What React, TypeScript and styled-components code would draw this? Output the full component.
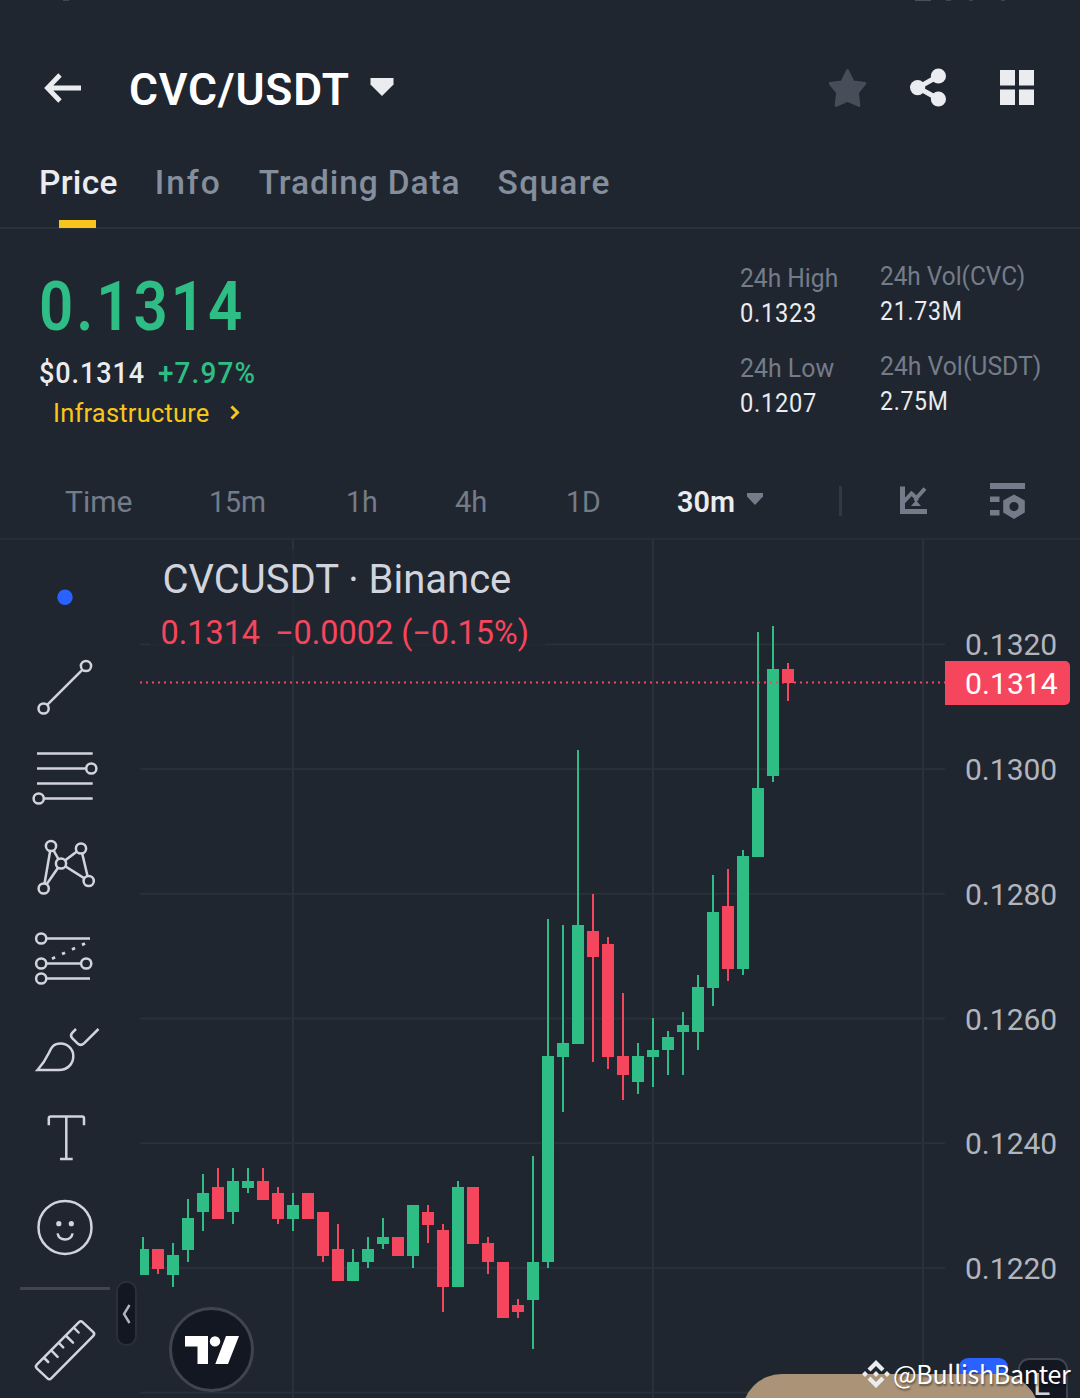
import React from "react";
import styled, { createGlobalStyle } from "styled-components";

const color = {
  bg: "#202630",
  line: "#2b313b",
  text: "#eaecef",
  tab: "#848e9c",
  muted: "#747c89",
  green: "#2ebd85",
  red: "#f6465d",
  yellow: "#f8c51c",
  tool: "#d1d4dc",
  axis: "#b2b5be",
  panel: "#131722",
};

const GlobalStyle = createGlobalStyle`
  * { box-sizing: border-box; }
  body { margin: 0; background: ${color.bg}; }
  svg { display: block; flex: none; }
`;

const Screen = styled.main`
  position: relative;
  width: 1080px;
  height: 1398px;
  overflow: hidden;
  display: flex;
  flex-direction: column;
  background: ${color.bg};
  color: ${color.text};
  font-family: Roboto, "Liberation Sans", sans-serif;
`;

const StatusEdge = styled.div`
  height: 46px;
  flex: none;
`;

const Header = styled.header`
  height: 83px;
  flex: none;
  display: flex;
  align-items: center;
  padding: 0 46px 0 43px;
`;

const Title = styled.h1`
  margin: 4px 17px 0 48px;
  font-size: 45px;
  line-height: 60px;
  font-weight: 600;
  color: #fff;
`;

const HeaderActions = styled.div`
  display: flex;
  align-items: center;
  margin-left: auto;
`;

const ActionGap = styled.span<{ $w: number }>`
  width: ${(p) => p.$w}px;
`;

const Tabs = styled.nav`
  height: 100px;
  flex: none;
  display: flex;
  gap: 37px;
  padding: 34px 0 0 39px;
  border-bottom: 2px solid ${color.line};
`;

const Tab = styled.div<{ $active?: boolean; $spacing?: number }>`
  display: flex;
  flex-direction: column;
  align-items: center;
  height: 66px;
  font-size: 33.5px;
  line-height: 40px;
  font-weight: 500;
  letter-spacing: ${(p) => p.$spacing ?? 0.3}px;
  color: ${(p) => (p.$active ? color.text : color.tab)};
`;

const TabBar = styled.span`
  width: 37px;
  height: 8px;
  margin: 17px 2px 0 0;
  background: ${color.yellow};
`;

const Summary = styled.section`
  height: 237px;
  flex: none;
  display: flex;
  padding: 0 0 0 39px;
`;

const PriceBlock = styled.div`
  width: 701px;
  padding-top: 43px;
`;

const Squeeze = styled.span<{ $x: number; $spacing?: number }>`
  display: inline-block;
  transform: scaleX(${(p) => p.$x});
  transform-origin: left center;
  letter-spacing: ${(p) => p.$spacing ?? 0}px;
  white-space: nowrap;
`;

const LastPrice = styled.div`
  font-size: 69px;
  line-height: 70px;
  font-weight: 600;
  color: ${color.green};
`;

const Quote = styled.div`
  display: grid;
  grid-template-columns: 119px auto;
  margin-top: 13px;
  font-size: 30px;
  line-height: 36px;
  font-weight: 500;
`;

const Change = styled.span`
  color: ${color.green};
`;

const Category = styled.div`
  display: flex;
  align-items: center;
  gap: 20px;
  margin-top: 7px;
  padding-left: 14px;
  font-size: 25.5px;
  line-height: 30px;
  letter-spacing: 0.2px;
  color: ${color.yellow};
`;

const StatColumn = styled.dl<{ $top: number; $w: number }>`
  width: ${(p) => p.$w}px;
  margin: 0;
  padding-top: ${(p) => p.$top}px;
`;

const StatLabel = styled.dt`
  font-size: 25.5px;
  line-height: 30px;
  color: ${color.muted};
`;

const StatValue = styled.dd`
  margin: 5px 0 25px;
  font-size: 26px;
  line-height: 30px;
  color: ${color.text};
`;

const Intervals = styled.nav`
  height: 74px;
  flex: none;
  display: grid;
  grid-template-columns: 144px 137px 109px 111px 111px 162px 60.5px 90px auto;
  align-items: center;
  padding: 0 0 0 65px;
  border-bottom: 2px solid #282e38;
  font-size: 30px;
  line-height: 36px;
  color: ${color.muted};
`;

const Interval = styled.span<{ $active?: boolean }>`
  display: flex;
  align-items: center;
  gap: ${(p) => (p.$active ? 10 : 0)}px;
  white-space: nowrap;
  font-weight: ${(p) => (p.$active ? 600 : 400)};
  color: ${(p) => (p.$active ? color.text : color.muted)};
`;

const IntervalTool = styled.span`
  margin-bottom: 2px;
`;

const Divider = styled.span`
  width: 3px;
  height: 30px;
  margin-bottom: 2px;
  background: #2f3a43;
`;

const Chart = styled.section`
  position: relative;
  flex: 1;
  display: flex;
  min-height: 0;
`;

const Rail = styled.aside`
  width: 140px;
  flex: none;
  display: flex;
  flex-direction: column;
  padding-top: 12px;
`;

const RailLine = styled.hr`
  width: 90px;
  height: 3px;
  margin: 15px 0 15px 20px;
  border: 0;
  flex: none;
  background: #40454f;
`;

const Axis = styled.div`
  width: 135px;
  padding-top: 42.3px;
`;

const AxisLabel = styled.div`
  height: 124.75px;
  padding-left: 20px;
  font-size: 30px;
  line-height: 126px;
  color: ${color.axis};
`;

const PriceTag = styled.div`
  position: absolute;
  left: 945px;
  top: 120.5px;
  width: 125px;
  height: 44px;
  padding-left: 20px;
  border-radius: 0 5px 5px 0;
  background: ${color.red};
  color: #fff;
  font-size: 30.2px;
  line-height: 46px;
`;

const Legend = styled.div`
  position: absolute;
  left: 150px;
  top: 10px;
  width: 395px;
  height: 106px;
  padding-left: 10.5px;
  background: rgba(32, 38, 48, 0.7);
`;

const Pair = styled.div`
  padding: 1px 0 0 2px;
  font-size: 40px;
  line-height: 57px;
  color: ${color.tool};
  white-space: pre;
`;

const Delta = styled.div`
  display: flex;
  gap: 15px;
  font-size: 32.4px;
  line-height: 50px;
  color: ${color.red};
  white-space: nowrap;
`;

const CollapseHandle = styled.div`
  position: absolute;
  left: 116px;
  top: 741px;
  width: 21px;
  height: 65px;
  display: grid;
  place-items: center;
  border: 2px solid #2a2f39;
  border-radius: 10px;
  background: ${color.panel};
`;

const ChartLogo = styled.div`
  position: absolute;
  left: 169px;
  top: 767px;
  width: 85px;
  height: 85px;
  display: grid;
  place-items: center;
  border: 3px solid #40444e;
  border-radius: 50%;
  background: ${color.panel};
`;

const BlueButton = styled.div`
  position: absolute;
  left: 959px;
  top: 818px;
  width: 49px;
  height: 60px;
  border-radius: 9px;
  background: #2962ff;
`;

const LogButton = styled.div`
  position: absolute;
  left: 1018px;
  top: 818px;
  width: 50px;
  height: 60px;
  border: 2px solid #40444e;
  border-radius: 11px;
  background: ${color.panel};
`;

const LogMark = styled.span`
  position: absolute;
  left: 1033px;
  top: 831px;
  font-size: 32px;
  line-height: 27px;
  color: ${color.tool};
`;

const Bubble = styled.div`
  position: absolute;
  left: 742px;
  top: 834px;
  width: 297px;
  height: 80px;
  border-radius: 42px;
  background: #ab9378;
`;

const Watermark = styled.div`
  position: absolute;
  left: 862px;
  top: 820px;
  display: flex;
  align-items: center;
  gap: 3px;
  font-family: "Noto Sans CJK SC", "Noto Sans", sans-serif;
  font-size: 25px;
  line-height: 30px;
  color: #fff;
  white-space: nowrap;
  text-shadow: 1px 2px 2px rgba(0, 0, 0, 0.45);
`;

const Handle = styled.span`
  margin-top: -3px;
  font-weight: 400;
  letter-spacing: -0.3px;
`;

type Candle = [open: number, high: number, low: number, close: number];

/* Prices in ticks of 0.0001. */
const candles: Candle[] = [
  [1219, 1225, 1219, 1223], [1223, 1223, 1219, 1220], [1219, 1224, 1217, 1222],
  [1223, 1231, 1221, 1228], [1229, 1235, 1226, 1232], [1233, 1236, 1228, 1228],
  [1229, 1236, 1227, 1234], [1233, 1236, 1232, 1234], [1234, 1236, 1231, 1231],
  [1232, 1233, 1227, 1228], [1228, 1232, 1226, 1230], [1232, 1232, 1228, 1228],
  [1229, 1229, 1221, 1222], [1223, 1227, 1218, 1218], [1218, 1223, 1218, 1221],
  [1221, 1225, 1220, 1223], [1224, 1228, 1223, 1225], [1225, 1225, 1222, 1222],
  [1222, 1230, 1220, 1230], [1229, 1230, 1224, 1227], [1226, 1227, 1213, 1217],
  [1217, 1234, 1217, 1233], [1233, 1233, 1224, 1224], [1224, 1225, 1219, 1221],
  [1221, 1221, 1212, 1212], [1214, 1215, 1212, 1213], [1215, 1238, 1207, 1221],
  [1221, 1276, 1220, 1254], [1254, 1275, 1245, 1256], [1256, 1303, 1256, 1275],
  [1274, 1280, 1253, 1270], [1272, 1273, 1252, 1254], [1254, 1264, 1247, 1251],
  [1250, 1256, 1248, 1254], [1254, 1260, 1249, 1255], [1255, 1258, 1251, 1257],
  [1258, 1261, 1251, 1259], [1258, 1267, 1255, 1265], [1265, 1283, 1262, 1277],
  [1278, 1284, 1266, 1268], [1268, 1287, 1267, 1286], [1286, 1322, 1286, 1297],
  [1299, 1323, 1298, 1316], [1316, 1317, 1311, 1314],
];

const TICK = 6.235;
const yOf = (p: number) => 104.3 + (1320 - p) * TICK;

function Plot() {
  return (
    <svg width="805" height="858" viewBox="0 0 805 858">
      {[153, 513, 783].map((x) => (
        <rect key={x} x={x - 1} y="0" width="2" height="858" fill={color.line} />
      ))}
      {[1320, 1300, 1280, 1260, 1240, 1220, 1200].map((p) => (
        <rect key={p} x="0" y={yOf(p) - 0.8} width="805" height="1.8" fill={color.line} />
      ))}
      {candles.map(([o, h, l, c], i) => {
        const x = 3 + i * 15;
        const fill = c >= o ? color.green : color.red;
        const top = Math.round(yOf(Math.max(o, c)));
        const bottom = Math.round(yOf(Math.min(o, c)) + 0.8);
        const high = Math.round(yOf(h));
        const low = Math.round(yOf(l) + 0.3);
        return (
          <g key={i} fill={fill}>
            <rect x={x - 1} y={high} width="2" height={low - high} />
            <rect x={x - 6} y={top} width="12" height={bottom - top} />
          </g>
        );
      })}
      <path d="M0 142.4H805" stroke={color.red} strokeWidth="2" strokeDasharray="2 4" />
    </svg>
  );
}

const toolGlyphs: React.ReactNode[] = [
  <circle cx="65" cy="45.3" r="7.7" fill="#2962ff" stroke="none" />,
  <>
    <path d="M47.2 62.8 82.3 27.8" />
    <circle cx="86" cy="24" r="5.1" />
    <circle cx="43.6" cy="66.5" r="5.1" />
  </>,
  <>
    <path d="M37 21.4H92.7M37 36.5H86M37 51.5H92.7M44 66.5H92.7" />
    <circle cx="91.3" cy="36.5" r="5.1" />
    <circle cx="38.7" cy="66.5" r="5.1" />
  </>,
  <>
    <path d="M51 24 43.7 66.5 61 41.5 81 26.5 88.7 59 61 41.5Z" />
    <g fill={color.bg}>
      <circle cx="51" cy="24" r="5.1" />
      <circle cx="81" cy="26.5" r="5.1" />
      <circle cx="61" cy="41.5" r="5.1" />
      <circle cx="43.7" cy="66.5" r="5.1" />
      <circle cx="88.7" cy="59" r="5.1" />
    </g>
  </>,
  <>
    <path d="M46.5 26.5H90M46.5 51.5H81M46.5 66.5H90" />
    <path d="M52 46.7 86 31" strokeWidth="2.8" strokeDasharray="3.4 7.6" />
    <circle cx="41.2" cy="26.5" r="5.1" />
    <circle cx="41.2" cy="51.5" r="5.1" />
    <circle cx="86.2" cy="51.5" r="5.1" />
    <circle cx="41.2" cy="66.5" r="5.1" />
  </>,
  <>
    <path d="M37.5 68C42.5 62.5 46 57 48.7 51.3C51.5 44.5 54 41.5 60.5 41.5C67.5 41.5 73.3 46.8 73.3 54C73.3 62 67.5 68 59 68Z" />
    <path d="M76 27 72.2 30.8Q69.8 33.4 72.2 36.2L77.5 41.4Q80.7 44.4 84 41.4L98.5 27" />
  </>,
  <path d="M48.8 33.3V26.5Q48.8 24.5 50.8 24.5H82Q84 24.5 84 26.5V33.3M66.3 24.5V67M60 67H72.7" />,
  <>
    <circle cx="65" cy="45.4" r="26.5" />
    <g fill={color.tool} stroke="none">
      <circle cx="58.8" cy="41.7" r="2.6" />
      <circle cx="71.3" cy="41.7" r="2.6" />
    </g>
    <path d="M57.6 51.4C58.6 59.4 71.4 59.4 72.6 51.4" />
  </>,
];

function ToolIcon({ children }: { children: React.ReactNode }) {
  return (
    <svg width="130" height="90" viewBox="0 0 130 90" fill="none" stroke={color.tool} strokeWidth="2.5">
      {children}
    </svg>
  );
}

const RulerGlyph = () => (
  <g strokeLinejoin="round" strokeLinecap="round">
    <path d="M79 17.1Q80.8 15.4 82.6 17.1L93.3 27.2Q95.1 29 93.3 30.8L51.2 73.3Q49.3 75.2 47.5 73.3L36.8 63.3Q35 61.5 36.8 59.6Z" />
    <path d="M44.2 53 48.2 57M51.5 45.6 57.6 51.8M59 38.2 63.2 42.3M66.2 31 73 37.6M74.2 23 78.6 27.5" />
  </g>
);

const stats = [
  {
    top: 34,
    width: 140,
    rows: [
      { label: "24h High", lx: 0.965, value: "0.1323", vx: 0.91, ls: 0.8 },
      { label: "24h Low", lx: 0.975, value: "0.1207", vx: 0.91, ls: 0.8 },
    ],
  },
  {
    top: 32,
    width: 190,
    rows: [
      { label: "24h Vol(CVC)", lx: 0.955, value: "21.73M", vx: 0.89, ls: 0.8 },
      { label: "24h Vol(USDT)", lx: 0.97, value: "2.75M", vx: 0.885, ls: 0.8 },
    ],
  },
];

export default function App() {
  return (
    <Screen>
      <GlobalStyle />
      <StatusEdge>
        <svg width="1080" height="2" viewBox="0 0 1080 2" fill="#4a515c">
          <path d="M63 0H69V.8H63ZM915 0H931V1H915ZM946 0H951V.8H946ZM969 0H973V.8H969ZM1001 0H1005V.8H1001Z" />
        </svg>
      </StatusEdge>

      <Header>
        <svg width="38" height="32" viewBox="0 0 38 32" fill="none" stroke={color.text} strokeWidth="4.8">
          <path d="M4.5 16H38M17 3 4.5 16 17 29" />
        </svg>
        <Title>
          <Squeeze $x={0.985} $spacing={0.8}>CVC/USDT</Squeeze>
        </Title>
        <svg width="24" height="20" viewBox="0 0 24 20" fill={color.text}>
          <path d="M.5 0H23.5V6.5L12 18 .5 6.5Z" />
        </svg>
        <HeaderActions>
          <svg width="38" height="40" viewBox="0 0 38 40" fill="#474d59" stroke="#474d59" strokeWidth="2.6" strokeLinejoin="round">
            <path d="M18.5 2.4 24.2 13.9 36 15.4 28.6 24.6 30 37.6 18.5 32.6 7 37.6 8.4 24.6 1 15.4 12.8 13.9Z" />
          </svg>
          <ActionGap $w={43} />
          <svg width="38" height="40" viewBox="0 0 38 40" fill={color.text}>
            <path d="M8 19.6 28.5 8M8 19.6 28.5 31" stroke={color.text} strokeWidth="5" />
            <circle cx="7.6" cy="19.6" r="7.6" />
            <circle cx="28.4" cy="8" r="7.6" />
            <circle cx="28.4" cy="31" r="7.6" />
          </svg>
          <ActionGap $w={52} />
          <svg width="34" height="35" viewBox="0 0 34 35" fill={color.text}>
            <path d="M0 0H15V15.5H0ZM19 0H34V15.5H19ZM0 19.5H15V35H0ZM19 19.5H34V35H19Z" />
          </svg>
        </HeaderActions>
      </Header>

      <Tabs>
        <Tab $active>
          Price
          <TabBar />
        </Tab>
        <Tab $spacing={2}>Info</Tab>
        <Tab $spacing={0.9}>Trading Data</Tab>
        <Tab $spacing={1.3}>Square</Tab>
      </Tabs>

      <Summary>
        <PriceBlock>
          <LastPrice>
            <Squeeze $x={0.87} $spacing={3.4}>0.1314</Squeeze>
          </LastPrice>
          <Quote>
            <Squeeze $x={0.9} $spacing={1}>$0.1314</Squeeze>
            <Change>
              <Squeeze $x={0.93} $spacing={1.2}>+7.97%</Squeeze>
            </Change>
          </Quote>
          <Category>
            Infrastructure
            <svg width="11" height="17" viewBox="0 0 11 17" fill="none" stroke={color.yellow} strokeWidth="3">
              <path d="M1.5 1.5 7.5 7.5 1.5 13.5" />
            </svg>
          </Category>
        </PriceBlock>
        {stats.map((col, i) => (
          <StatColumn key={i} $top={col.top} $w={col.width}>
            {col.rows.map((r) => (
              <React.Fragment key={r.label}>
                <StatLabel>
                  <Squeeze $x={r.lx}>{r.label}</Squeeze>
                </StatLabel>
                <StatValue>
                  <Squeeze $x={r.vx} $spacing={r.ls}>{r.value}</Squeeze>
                </StatValue>
              </React.Fragment>
            ))}
          </StatColumn>
        ))}
      </Summary>

      <Intervals>
        <Interval>Time</Interval>
        <Interval><Squeeze $x={0.95}>15m</Squeeze></Interval>
        <Interval><Squeeze $x={0.95}>1h</Squeeze></Interval>
        <Interval><Squeeze $x={0.97}>4h</Squeeze></Interval>
        <Interval><Squeeze $x={0.95}>1D</Squeeze></Interval>
        <Interval $active>
          <Squeeze $x={0.96}>30m</Squeeze>
          <svg width="16" height="18" viewBox="0 0 16 18" fill={color.muted}>
            <path d="M0 0H16V3.5L8 12 0 3.5Z" />
          </svg>
        </Interval>
        <Divider />
        <IntervalTool>
          <svg width="28" height="30" viewBox="0 0 28 30" fill="none" stroke={color.muted}>
            <path d="M2.5 0.5V25.5H27" strokeWidth="5" />
            <path d="M3.5 16 11.5 7.5 16.5 12 25 2.5" strokeWidth="4" />
            <path d="M11 20H21L17 15.5 19 13H13.5L15 15.5Z" fill={color.muted} stroke="none" />
          </svg>
        </IntervalTool>
        <IntervalTool>
          <svg width="36" height="38" viewBox="0 0 36 38" fill={color.muted}>
            <path d="M0 1H35V7H0ZM0 14.5H9.5V20H0ZM0 28H9.5V33.5H0Z" />
            <path fillRule="evenodd" d="M24 12.5 34.8 18.5V30.5L24 37 13.2 30.5V18.5ZM24 20A4.6 4.6 0 1 0 24 29.2A4.6 4.6 0 1 0 24 20Z" />
          </svg>
        </IntervalTool>
      </Intervals>

      <Chart>
        <Rail>
          {toolGlyphs.map((glyph, i) => (
            <ToolIcon key={i}>{glyph}</ToolIcon>
          ))}
          <RailLine />
          <ToolIcon>
            <RulerGlyph />
          </ToolIcon>
        </Rail>
        <Plot />
        <Axis>
          {["0.1320", "0.1300", "0.1280", "0.1260", "0.1240", "0.1220"].map((v) => (
            <AxisLabel key={v}>{v}</AxisLabel>
          ))}
        </Axis>

        <PriceTag>0.1314</PriceTag>
        <Legend>
          <Pair>CVCUSDT · Binance</Pair>
          <Delta>
            <span>0.1314</span>
            <span>−0.0002 (−0.15%)</span>
          </Delta>
        </Legend>
        <CollapseHandle>
          <svg width="10" height="22" viewBox="0 0 10 22" fill="none" stroke={color.axis} strokeWidth="2.4">
            <path d="M7.5 2 2 11 7.5 20" />
          </svg>
        </CollapseHandle>
        <ChartLogo>
          <svg width="54" height="28" viewBox="0 0 54 28" fill="#fff">
            <path d="M0 0H23V28H12.5V10.5H0ZM41 0H54L43 28H30.3Z" />
            <circle cx="30" cy="5.4" r="5.2" />
          </svg>
        </ChartLogo>

        <BlueButton />
        <LogButton />
        <Bubble />
        <LogMark>L</LogMark>
        <Watermark>
          <svg width="28" height="28" viewBox="0 0 28 28" fill="#eaecef">
            <path d="M14 0 22.5 8.5 19.5 11.5 14 6 8.5 11.5 5.5 8.5ZM14 28 22.5 19.5 19.5 16.5 14 22 8.5 16.5 5.5 19.5ZM14 11 17 14 14 17 11 14ZM3 11 6 14 3 17 0 14ZM25 11 28 14 25 17 22 14Z" />
          </svg>
          <Handle>@BullishBanter</Handle>
        </Watermark>
      </Chart>
    </Screen>
  );
}
